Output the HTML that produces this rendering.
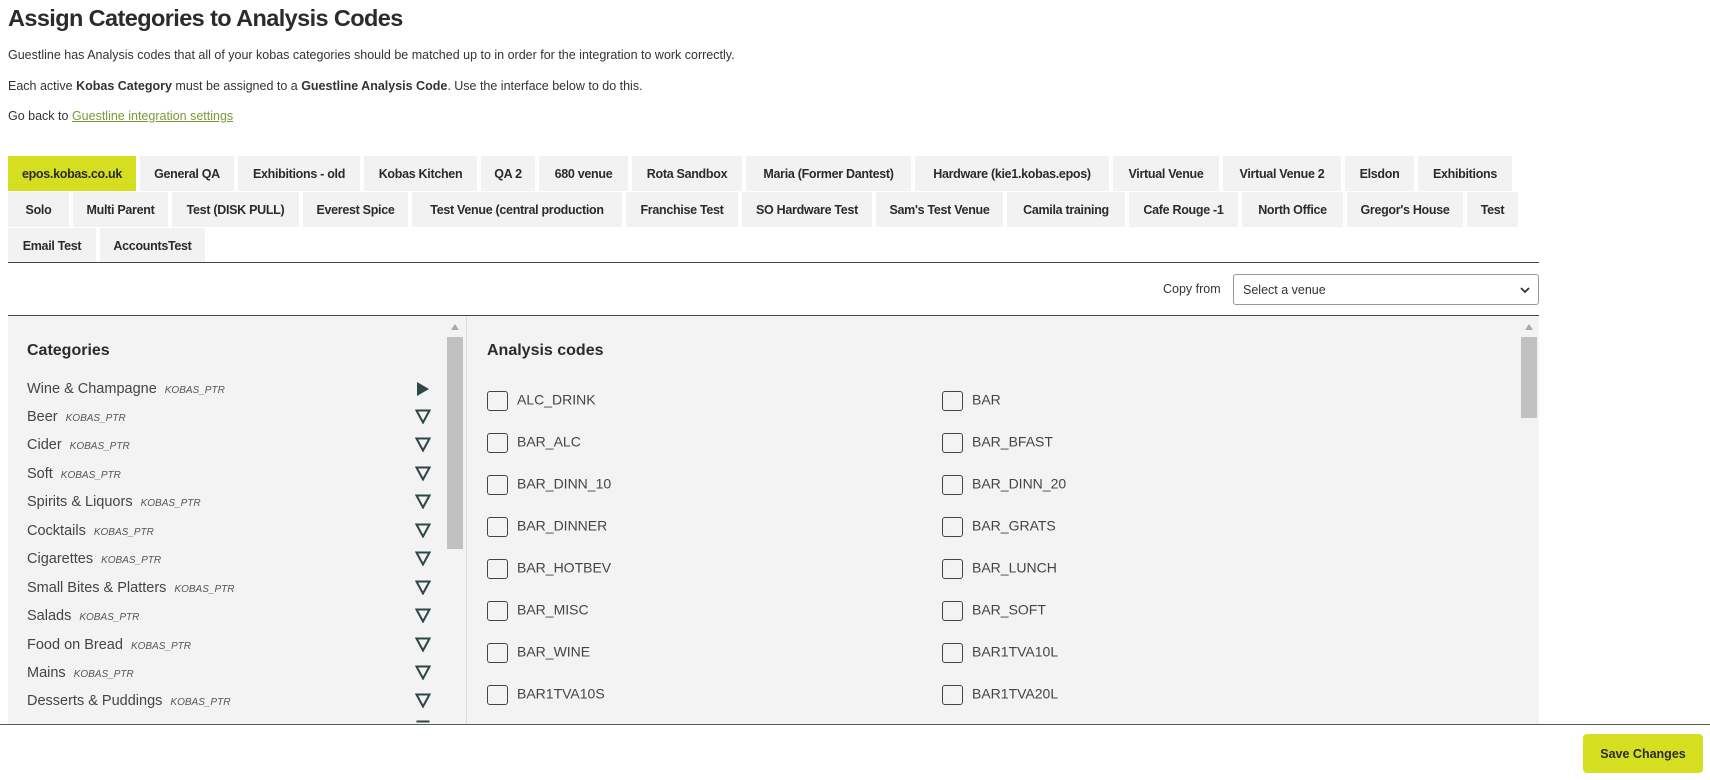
<!DOCTYPE html>
<html><head><meta charset="utf-8"><style>
*{box-sizing:border-box;margin:0;padding:0}
body{width:1710px;height:780px;overflow:hidden;background:#fff;font-family:"Liberation Sans",sans-serif;color:#333;position:relative}
h1{position:absolute;left:8px;top:5px;font-size:23.5px;font-weight:bold;color:#2b2b2b;letter-spacing:-0.6px}
.p{position:absolute;left:8px;font-size:12.5px;color:#333}
.p a{color:#7a9a3a;text-decoration:underline}
.row{position:absolute;left:8px;display:flex;gap:4px}
.t{height:35px;background:#f2f2f2;font-size:12.5px;font-weight:bold;color:#2b2b2b;display:flex;align-items:center;justify-content:center;white-space:nowrap;letter-spacing:-0.3px}
.t.a{background:#d6de20}
.hl{position:absolute;left:8px;width:1531px;height:1px;background:#3a4848}
.sel{position:absolute;left:1233px;top:274px;width:306px;height:31px;border:1px solid #999;border-radius:3px;font-size:12.5px;padding:8px 9px;color:#333}
.panel{position:absolute;left:8px;top:316px;width:1531px;height:408px;background:#f3f3f3;overflow:hidden}
.h{position:absolute;font-size:16px;font-weight:bold;color:#2b2b2b}
.cat{position:absolute;left:19px;font-size:14.5px;color:#444;margin-top:1px}
.cat i{font-size:10px;color:#555;margin-left:8px}
.arr{position:absolute;left:407px}
.cb{position:absolute;font-size:14px;color:#444;margin-top:2px}
.cb span{display:inline-block;width:21px;height:20px;border:1.5px solid #444;border-radius:3px;vertical-align:middle;margin-right:9px}
</style></head><body>
<h1>Assign Categories to Analysis Codes</h1>
<div class="p" style="top:48px">Guestline has Analysis codes that all of your kobas categories should be matched up to in order for the integration to work correctly.</div>
<div class="p" style="top:79px">Each active <b>Kobas Category</b> must be assigned to a <b>Guestline Analysis Code</b>. Use the interface below to do this.</div>
<div class="p" style="top:109px">Go back to <a>Guestline integration settings</a></div>

<div class="row" style="top:156px">
<div class="t a" style="width:128px">epos.kobas.co.uk</div><div class="t" style="width:94px">General QA</div><div class="t" style="width:122px">Exhibitions - old</div><div class="t" style="width:113px">Kobas Kitchen</div><div class="t" style="width:54px">QA 2</div><div class="t" style="width:89px">680 venue</div><div class="t" style="width:110px">Rota Sandbox</div><div class="t" style="width:165px">Maria (Former Dantest)</div><div class="t" style="width:194px">Hardware (kie1.kobas.epos)</div><div class="t" style="width:106px">Virtual Venue</div><div class="t" style="width:118px">Virtual Venue 2</div><div class="t" style="width:69px">Elsdon</div><div class="t" style="width:94px">Exhibitions</div>
</div>
<div class="row" style="top:192px">
<div class="t" style="width:61px">Solo</div><div class="t" style="width:95px">Multi Parent</div><div class="t" style="width:127px">Test (DISK PULL)</div><div class="t" style="width:105px">Everest Spice</div><div class="t" style="width:210px">Test Venue (central production</div><div class="t" style="width:112px">Franchise Test</div><div class="t" style="width:130px">SO Hardware Test</div><div class="t" style="width:127px">Sam's Test Venue</div><div class="t" style="width:118px">Camila training</div><div class="t" style="width:109px">Cafe Rouge -1</div><div class="t" style="width:101px">North Office</div><div class="t" style="width:116px">Gregor's House</div><div class="t" style="width:51px">Test</div>
</div>
<div class="row" style="top:228px">
<div class="t" style="width:88px">Email Test</div><div class="t" style="width:105px">AccountsTest</div>
</div>
<div class="hl" style="top:262px"></div>
<div style="position:absolute;left:1163px;top:282px;font-size:12.5px;color:#333">Copy from</div>
<div class="sel">Select a venue<svg style="position:absolute;right:8px;top:12px" width="10" height="7" viewBox="0 0 10 7"><path d="M1 1l4 4 4-4" fill="none" stroke="#333" stroke-width="1.8"/></svg></div>
<div class="hl" style="top:315px"></div>

<div class="panel">
<div style="position:absolute;left:458px;top:0;width:1px;height:408px;background:#ddd"></div>
<div style="position:absolute;left:439px;top:21px;width:16px;height:212px;background:#c1c1c1"></div>
<svg style="position:absolute;left:443px;top:8px" width="8" height="6"><path d="M0 6L4 0 8 6z" fill="#aaa"/></svg>
<div style="position:absolute;left:1513px;top:21px;width:16px;height:81px;background:#c1c1c1"></div>
<svg style="position:absolute;left:1517px;top:8px" width="8" height="6"><path d="M0 6L4 0 8 6z" fill="#aaa"/></svg>
<div class="h" style="left:19px;top:26px">Categories</div>
<div class="h" style="left:479px;top:26px">Analysis codes</div>
<div class="cat" style="top:64px">Wine &amp; Champagne<i>KOBAS_PTR</i></div>
<div class="cat" style="top:92px">Beer<i>KOBAS_PTR</i></div>
<div class="cat" style="top:120px">Cider<i>KOBAS_PTR</i></div>
<div class="cat" style="top:149px">Soft<i>KOBAS_PTR</i></div>
<div class="cat" style="top:177px">Spirits &amp; Liquors<i>KOBAS_PTR</i></div>
<div class="cat" style="top:206px">Cocktails<i>KOBAS_PTR</i></div>
<div class="cat" style="top:234px">Cigarettes<i>KOBAS_PTR</i></div>
<div class="cat" style="top:263px">Small Bites &amp; Platters<i>KOBAS_PTR</i></div>
<div class="cat" style="top:291px">Salads<i>KOBAS_PTR</i></div>
<div class="cat" style="top:320px">Food on Bread<i>KOBAS_PTR</i></div>
<div class="cat" style="top:348px">Mains<i>KOBAS_PTR</i></div>
<div class="cat" style="top:376px">Desserts &amp; Puddings<i>KOBAS_PTR</i></div>
<svg class="arr" style="top:66px" width="14" height="14"><path d="M2 0L14 7 2 14z" fill="#2e4744"/></svg>
<svg class="arr" style="top:93px" width="16" height="15"><path d="M1.5 1.5h13L8 13.5z" fill="none" stroke="#2e4744" stroke-width="2"/></svg>
<svg class="arr" style="top:121px" width="16" height="15"><path d="M1.5 1.5h13L8 13.5z" fill="none" stroke="#2e4744" stroke-width="2"/></svg>
<svg class="arr" style="top:150px" width="16" height="15"><path d="M1.5 1.5h13L8 13.5z" fill="none" stroke="#2e4744" stroke-width="2"/></svg>
<svg class="arr" style="top:178px" width="16" height="15"><path d="M1.5 1.5h13L8 13.5z" fill="none" stroke="#2e4744" stroke-width="2"/></svg>
<svg class="arr" style="top:207px" width="16" height="15"><path d="M1.5 1.5h13L8 13.5z" fill="none" stroke="#2e4744" stroke-width="2"/></svg>
<svg class="arr" style="top:235px" width="16" height="15"><path d="M1.5 1.5h13L8 13.5z" fill="none" stroke="#2e4744" stroke-width="2"/></svg>
<svg class="arr" style="top:264px" width="16" height="15"><path d="M1.5 1.5h13L8 13.5z" fill="none" stroke="#2e4744" stroke-width="2"/></svg>
<svg class="arr" style="top:292px" width="16" height="15"><path d="M1.5 1.5h13L8 13.5z" fill="none" stroke="#2e4744" stroke-width="2"/></svg>
<svg class="arr" style="top:321px" width="16" height="15"><path d="M1.5 1.5h13L8 13.5z" fill="none" stroke="#2e4744" stroke-width="2"/></svg>
<svg class="arr" style="top:349px" width="16" height="15"><path d="M1.5 1.5h13L8 13.5z" fill="none" stroke="#2e4744" stroke-width="2"/></svg>
<svg class="arr" style="top:377px" width="16" height="15"><path d="M1.5 1.5h13L8 13.5z" fill="none" stroke="#2e4744" stroke-width="2"/></svg>
<svg class="arr" style="top:404px" width="16" height="6"><path d="M1.5 1.5h13" fill="none" stroke="#2e4744" stroke-width="2"/></svg>
<div class="cb" style="left:479px;top:73px"><span></span>ALC_DRINK</div>
<div class="cb" style="left:479px;top:115px"><span></span>BAR_ALC</div>
<div class="cb" style="left:479px;top:157px"><span></span>BAR_DINN_10</div>
<div class="cb" style="left:479px;top:199px"><span></span>BAR_DINNER</div>
<div class="cb" style="left:479px;top:241px"><span></span>BAR_HOTBEV</div>
<div class="cb" style="left:479px;top:283px"><span></span>BAR_MISC</div>
<div class="cb" style="left:479px;top:325px"><span></span>BAR_WINE</div>
<div class="cb" style="left:479px;top:367px"><span></span>BAR1TVA10S</div>
<div class="cb" style="left:934px;top:73px"><span></span>BAR</div>
<div class="cb" style="left:934px;top:115px"><span></span>BAR_BFAST</div>
<div class="cb" style="left:934px;top:157px"><span></span>BAR_DINN_20</div>
<div class="cb" style="left:934px;top:199px"><span></span>BAR_GRATS</div>
<div class="cb" style="left:934px;top:241px"><span></span>BAR_LUNCH</div>
<div class="cb" style="left:934px;top:283px"><span></span>BAR_SOFT</div>
<div class="cb" style="left:934px;top:325px"><span></span>BAR1TVA10L</div>
<div class="cb" style="left:934px;top:367px"><span></span>BAR1TVA20L</div>
</div>
<div style="position:absolute;left:0;top:724px;width:1710px;height:1px;background:#4a5e5c"></div>
<div style="position:absolute;left:1583px;top:734px;width:120px;height:39px;background:#d6de20;border-radius:4px;font-size:12.5px;font-weight:bold;color:#2b2b2b;display:flex;align-items:center;justify-content:center">Save Changes</div>
</body></html>
